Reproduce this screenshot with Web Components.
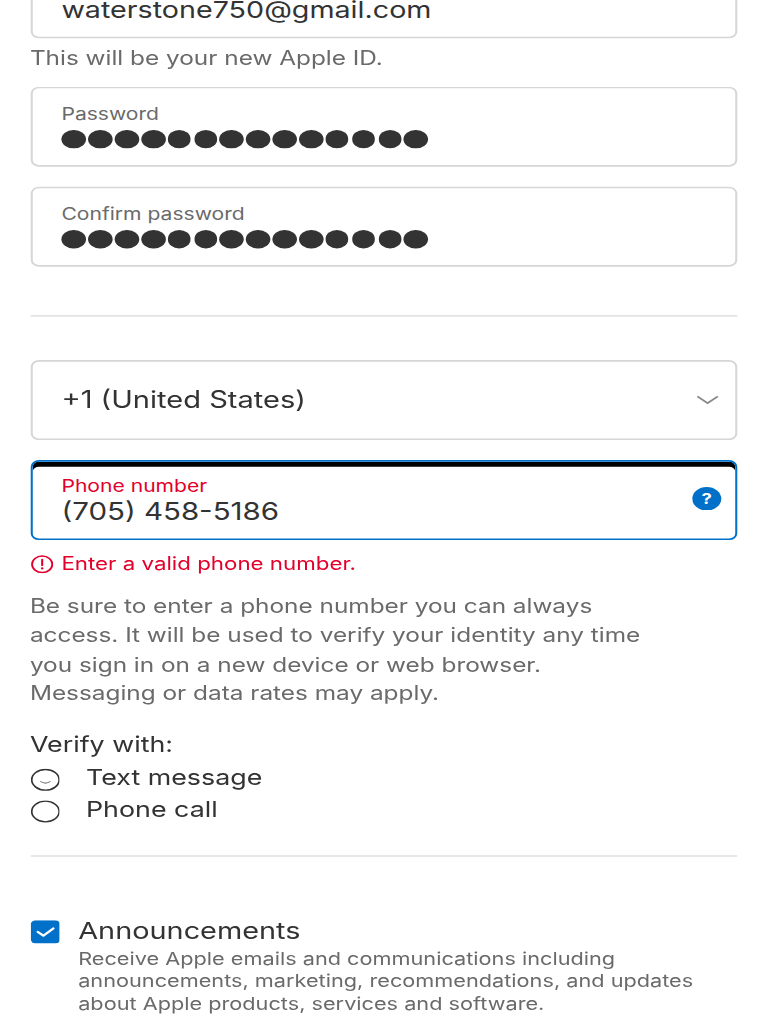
<!DOCTYPE html>
<html lang="en">
<head>
<meta charset="utf-8">
<title>Create Your Apple ID</title>
<style>
  html, body { margin: 0; height: 100%; overflow: hidden; background: #fff; }
</style>
</head>
<body>
<signup-form>
  <form-field style="margin-top:-25.2px; --value-size:14px" value="waterstone750@gmail.com"></form-field>
  <form-note tone="hint">This will be your new Apple ID.</form-note>
  <form-field label="Password" secret="14"></form-field>
  <form-field style="margin-top:12px" label="Confirm password" secret="14"></form-field>
  <form-rule style="margin:28.6px 0 25.5px"></form-rule>
  <form-select>+1 (United States)</form-select>
  <form-field style="margin-top:12px; --value-size:14.4px" label="Phone number" value="(705) 458-5186" state="error"></form-field>
  <form-note tone="error">Enter a valid phone number.</form-note>
  <form-note tone="body">Be sure to enter a phone number you can always access. It will be used to verify your identity any time you sign in on a new device or web browser. Messaging or data rates may apply.</form-note>
  <verify-group>
    <form-radio mark>Text message</form-radio>
    <form-radio>Phone call</form-radio>
  </verify-group>
  <form-rule style="margin:18px 0 0"></form-rule>
  <form-check title-text="Announcements">Receive Apple emails and communications including announcements, marketing, recommendations, and updates about Apple products, services and software.</form-check>
</signup-form>

<script>
const FONT = '"Inter", "Liberation Sans", sans-serif';

class SignupForm extends HTMLElement {
  constructor() {
    super();
    this.attachShadow({ mode: "open" }).innerHTML = `
      <style>
        /* the screen is a 375pt phone layout stretched to 768x1024 */
        :host {
          display: flex;
          flex-direction: column;
          width: 345.8px;
          padding: 0 14.6px;
          transform-origin: 0 0;
          transform: scale(2.048, 1.667);
          font-family: ${FONT};
          color: #333;
        }
      </style>
      <slot></slot>
    `;
  }
}

class FormField extends HTMLElement {
  constructor() {
    super();
    const label = this.getAttribute("label") || "";
    const value = this.getAttribute("value") || "";
    const secret = Number(this.getAttribute("secret") || 0);
    const error = this.getAttribute("state") === "error";
    const dots = '<i class="dot"></i>'.repeat(secret);
    this.attachShadow({ mode: "open" }).innerHTML = `
      <style>
        :host {
          display: block;
          box-sizing: border-box;
          height: 48px;
          position: relative;
          border: 1px solid #d6d6d6;
          border-radius: 4px;
          padding: 8.2px 14.4px 0;
          background: #fff;
        }
        :host([state="error"]) {
          border-color: #0070c9;
          box-shadow: inset 0 3px 0 #000;
        }
        .label { font-size: 10.3px; line-height: 13px; min-height: 13px; color: #6a6a6a; }
        :host([state="error"]) .label { color: #e3002b; }
        .value { font-size: var(--value-size, 14.2px); line-height: 18px; color: #333; }
        .dots { display: flex; gap: 1.2px; height: 18px; align-items: center; margin-left: .4px; }
        .dot { width: 11.67px; height: 11px; border-radius: 50%; background: #333; flex: none; }
        .help { position: absolute; right: 6.8px; top: 15.2px; width: 14.2px; height: 14.4px; }
      </style>
      <div class="label">${label}</div>
      ${secret ? `<div class="dots">${dots}</div>` : `<div class="value">${value}</div>`}
      ${error ? `<svg class="help" viewBox="0 0 15 15"><circle cx="7.5" cy="7.5" r="7.5" fill="#0070c9"/><text x="7.5" y="11" text-anchor="middle" font-size="9.5" font-weight="700" fill="#fff" font-family="Inter, sans-serif">?</text></svg>` : ""}
    `;
  }
}

class FormNote extends HTMLElement {
  constructor() {
    super();
    const error = this.getAttribute("tone") === "error";
    this.attachShadow({ mode: "open" }).innerHTML = `
      <style>
        :host { display: flex; font-size: 11.9px; line-height: 17.1px; color: #6a6a6a; }
        :host([tone="hint"]) { margin: 3.5px 0 9px; }
        :host([tone="error"]) { margin: 6.2px 0 0; color: #e3002b; font-size: 10.9px; align-items: center; gap: 4.2px; }
        :host([tone="body"]) { margin: 8.6px 0 0; max-width: 300px; }
        svg { width: 11.2px; height: 11px; flex: none; }
      </style>
      ${error ? `<svg viewBox="0 0 12 12"><circle cx="6" cy="6" r="5.4" fill="none" stroke="#e3002b" stroke-width="1"/><path d="M6 3v3.6" stroke="#e3002b" stroke-width="1.1" stroke-linecap="round"/><circle cx="6" cy="8.7" r=".7" fill="#e3002b"/></svg>` : ""}
      <span><slot></slot></span>
    `;
  }
}

class FormRule extends HTMLElement {
  constructor() {
    super();
    this.attachShadow({ mode: "open" }).innerHTML = `
      <style>:host { display: block; height: 1px; background: #e3e3e3; }</style>
    `;
  }
}

class FormSelect extends HTMLElement {
  constructor() {
    super();
    this.attachShadow({ mode: "open" }).innerHTML = `
      <style>
        :host {
          display: flex;
          align-items: center;
          justify-content: space-between;
          box-sizing: border-box;
          height: 48px;
          border: 1px solid #d6d6d6;
          border-radius: 4px;
          padding: 0 8.5px 0 14.4px;
          font-size: 14.2px;
          color: #333;
        }
        svg { width: 11px; height: 6px; }
      </style>
      <span><slot></slot></span>
      <svg viewBox="0 0 11 6"><path d="M.5 .8 5.5 4.8 10.5 .8" fill="none" stroke="#888" stroke-width="1"/></svg>
    `;
  }
}

class VerifyGroup extends HTMLElement {
  constructor() {
    super();
    this.attachShadow({ mode: "open" }).innerHTML = `
      <style>
        :host { display: block; margin-top: 13.2px; font-size: 13.1px; color: #333; }
        .title { line-height: 19.6px; }
      </style>
      <div class="title">Verify with:</div>
      <slot></slot>
    `;
  }
}

class FormRadio extends HTMLElement {
  constructor() {
    super();
    const mark = this.hasAttribute("mark");
    this.attachShadow({ mode: "open" }).innerHTML = `
      <style>
        :host { display: flex; align-items: center; gap: 13px; height: 19.2px; font-size: 13.1px; color: #333; }
        svg { width: 14.4px; height: 13.6px; flex: none; margin-top: 3.5px; }
      </style>
      <svg viewBox="0 0 29 27"><ellipse cx="14.5" cy="13.5" rx="13.5" ry="12.5" fill="none" stroke="#333" stroke-width="1.7"/>${mark ? '<path d="M9.5 15.5q5 4 10 0" fill="none" stroke="#777" stroke-width="1.2"/>' : ""}</svg>
      <span><slot></slot></span>
    `;
  }
}

class FormCheck extends HTMLElement {
  constructor() {
    super();
    this.attachShadow({ mode: "open" }).innerHTML = `
      <style>
        :host { display: flex; gap: 9.2px; margin-top: 33px; color: #333; }
        svg { width: 14.4px; height: 14px; flex: none; margin-top: 4.6px; }
        .name { font-size: 14.1px; line-height: 21.9px; }
        .text { font-size: 10.6px; line-height: 13.5px; color: #6a6a6a; }
      </style>
      <svg viewBox="0 0 14 14" preserveAspectRatio="none"><rect width="14" height="14" rx="2.5" fill="#0070c9"/><path d="M3.4 7.1 6 9.3 10.7 5" fill="none" stroke="#fff" stroke-width="1.3" stroke-linecap="round" stroke-linejoin="round"/></svg>
      <div>
        <div class="name">${this.getAttribute("title-text")}</div>
        <div class="text"><slot></slot></div>
      </div>
    `;
  }
}

customElements.define("signup-form", SignupForm);
customElements.define("form-field", FormField);
customElements.define("form-note", FormNote);
customElements.define("form-rule", FormRule);
customElements.define("form-select", FormSelect);
customElements.define("verify-group", VerifyGroup);
customElements.define("form-radio", FormRadio);
customElements.define("form-check", FormCheck);
</script>
</body>
</html>
